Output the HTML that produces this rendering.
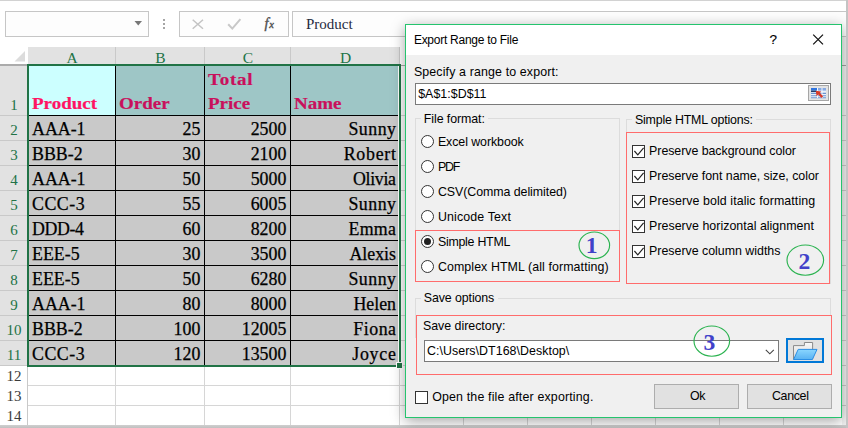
<!DOCTYPE html>
<html><head><meta charset="utf-8"><title>Export Range to File</title>
<style>
html,body{margin:0;padding:0;}
body{width:848px;height:428px;position:relative;overflow:hidden;background:#fff;font-family:"Liberation Sans",sans-serif;}
div,span{position:absolute;box-sizing:border-box;white-space:nowrap;}
.se{font-family:"Liberation Serif",serif;}
.ch{top:47px;height:17px;background:#e2e2e2;color:#217346;font-family:"Liberation Serif",serif;font-size:15.5px;line-height:21px;text-align:center;border-right:1px solid #c9c9c9;padding-left:1px;}
.rh{left:0;width:27px;background:#e2e2e2;color:#217346;font-family:"Liberation Serif",serif;font-size:15px;text-align:center;border-bottom:1px solid #c9c9c9;padding-left:1px;}
.rn{left:0;width:27px;background:#fff;color:#3b3b3b;font-family:"Liberation Serif",serif;font-size:15px;text-align:center;padding-left:1px;}
.c{background:#c9c9c9;font-family:"Liberation Serif",serif;font-size:17.85px;color:#000;height:25px;line-height:26px;border-right:1px solid #000;border-bottom:1px solid #000;-webkit-text-stroke:0.25px currentColor;}
.r{text-align:right;padding-right:3.7px;}
.l{padding-left:3px;}
.h{background:#9ec6c6;color:#c9105c;font-weight:bold;font-size:17.5px;-webkit-text-stroke:0.2px currentColor;}
.h span{transform:scaleX(1.085);transform-origin:0 0;}
.gl{background:#d6d6d6;}
.rad{width:13px;height:13px;border:1px solid #333;border-radius:50%;background:#fff;}
.cb{width:13px;height:13px;border:1px solid #333;background:#fff;}
.grp{border:1px solid #dcdcdc;}
.red{border:1px solid #ff6c6c;}
.btn{background:#e1e1e1;border:1px solid #adadad;}
.num{font-family:"Liberation Serif",serif;font-weight:bold;color:#4141c9;font-size:23.6px;line-height:24px;text-align:center;}
</style></head><body>

<div style="left:0;top:0;width:848px;height:1px;background:#d2d2d2"></div>
<div style="left:5px;top:11px;width:144px;height:26px;border:1px solid #c6c6c6;background:#fdfdfd"></div>
<svg style="position:absolute;left:134px;top:21px" width="9" height="5"><path d="M0.5 0 L8 0 L4.25 4.4 Z" fill="#777"/></svg>
<div style="left:163px;top:19px;width:2px;height:2px;background:#a6a6a6"></div>
<div style="left:163px;top:23px;width:2px;height:2px;background:#a6a6a6"></div>
<div style="left:163px;top:27px;width:2px;height:2px;background:#a6a6a6"></div>
<div style="left:179px;top:11px;width:110px;height:26px;border:1px solid #c6c6c6;background:#fdfdfd"></div>
<svg style="position:absolute;left:190px;top:17px" width="16" height="14"><path d="M2.7 2.8 L13 11.8 M13 2.8 L2.7 11.8" stroke="#c4c4c4" stroke-width="1.5" fill="none"/></svg>
<svg style="position:absolute;left:226px;top:16px" width="18" height="16"><path d="M2.2 8.2 L6.3 12.6 L14.4 3.2" stroke="#c8c8c8" stroke-width="2" fill="none"/></svg>
<span class="se" style="left:264.6px;top:13px;font-size:14.5px;line-height:20px;font-style:italic;color:#505050;-webkit-text-stroke:0.35px #505050"><span style="position:static">f</span><span style="position:static;font-size:10.5px;margin-left:0.6px">x</span></span>
<div style="left:292px;top:11px;width:558px;height:26px;border:1px solid #c6c6c6;background:#fdfdfd"></div>
<span class="se" style="left:306px;top:15px;font-size:15px;line-height:18px;color:#262b40">Product</span>
<div style="left:0;top:47px;width:28px;height:18px;background:#fff;border-bottom:1px solid #ababab"></div>
<svg style="position:absolute;left:14px;top:50px" width="12" height="12"><path d="M0.5 11.5 L11 1 L11 11.5 Z" fill="#dcdcdc"/></svg>
<div class="ch" style="left:28px;width:88px">A</div>
<div class="ch" style="left:116px;width:89px">B</div>
<div class="ch" style="left:205px;width:86px">C</div>
<div class="ch" style="left:291px;width:109px">D</div>
<div style="left:401px;top:65px;width:447px;height:1px;background:#ababab"></div>
<div class="rh" style="top:66px;height:50px;line-height:79px">1</div>
<div class="rh" style="top:116px;height:25px;line-height:29px">2</div>
<div class="rh" style="top:141px;height:25px;line-height:29px">3</div>
<div class="rh" style="top:166px;height:25px;line-height:29px">4</div>
<div class="rh" style="top:191px;height:25px;line-height:29px">5</div>
<div class="rh" style="top:216px;height:25px;line-height:29px">6</div>
<div class="rh" style="top:241px;height:25px;line-height:29px">7</div>
<div class="rh" style="top:266px;height:25px;line-height:29px">8</div>
<div class="rh" style="top:291px;height:25px;line-height:29px">9</div>
<div class="rh" style="top:316px;height:25px;line-height:29px">10</div>
<div class="rh" style="top:341px;height:25px;line-height:29px">11</div>
<div class="rn" style="top:367px;height:19px;line-height:19px">12</div>
<div class="rn" style="top:386px;height:19px;line-height:20px">13</div>
<div class="rn" style="top:406px;height:19px;line-height:20px">14</div>
<div style="left:0;top:65px;width:27px;height:1px;background:#ababab"></div>
<div class="c h" style="left:29px;top:66px;width:87px;height:50px;background:#ccffff;color:#ff1464;"><span style="left:3px;top:24px;line-height:27px">Product</span></div>
<div class="c h" style="left:116px;top:66px;width:89px;height:50px;"><span style="left:3px;top:24px;line-height:27px">Order</span></div>
<div class="c h" style="left:205px;top:66px;width:86px;height:50px;"><span style="left:3px;top:-0.5px;line-height:27px;letter-spacing:0.7px">Total</span><span style="left:3px;top:24px;line-height:27px">Price</span></div>
<div class="c h" style="left:291px;top:66px;width:107px;height:50px;border-right:none;"><span style="left:3px;top:24px;line-height:27px">Name</span></div>
<div class="c l" style="left:29px;top:116px;width:87px;">AAA-1</div>
<div class="c r" style="left:116px;top:116px;width:89px;">25</div>
<div class="c r" style="left:205px;top:116px;width:86px;">2500</div>
<div class="c r" style="left:291px;top:116px;width:107px;border-right:none;padding-right:2px;"><span style="position:static;letter-spacing:0.5px;margin-right:-0.5px">Sunny</span></div>
<div class="c l" style="left:29px;top:141px;width:87px;">BBB-2</div>
<div class="c r" style="left:116px;top:141px;width:89px;">30</div>
<div class="c r" style="left:205px;top:141px;width:86px;">2100</div>
<div class="c r" style="left:291px;top:141px;width:107px;border-right:none;padding-right:2px;"><span style="position:static;letter-spacing:0.74px;margin-right:-0.74px">Robert</span></div>
<div class="c l" style="left:29px;top:166px;width:87px;">AAA-1</div>
<div class="c r" style="left:116px;top:166px;width:89px;">50</div>
<div class="c r" style="left:205px;top:166px;width:86px;">5000</div>
<div class="c r" style="left:291px;top:166px;width:107px;border-right:none;padding-right:2px;"><span style="position:static;letter-spacing:-0.3px;margin-right:0.3px">Olivia</span></div>
<div class="c l" style="left:29px;top:191px;width:87px;"><span style="position:static;letter-spacing:0.5px">CCC-3</span></div>
<div class="c r" style="left:116px;top:191px;width:89px;">55</div>
<div class="c r" style="left:205px;top:191px;width:86px;">6005</div>
<div class="c r" style="left:291px;top:191px;width:107px;border-right:none;padding-right:2px;"><span style="position:static;letter-spacing:0.5px;margin-right:-0.5px">Sunny</span></div>
<div class="c l" style="left:29px;top:216px;width:87px;"><span style="position:static;letter-spacing:-0.4px">DDD-4</span></div>
<div class="c r" style="left:116px;top:216px;width:89px;">60</div>
<div class="c r" style="left:205px;top:216px;width:86px;">8200</div>
<div class="c r" style="left:291px;top:216px;width:107px;border-right:none;padding-right:2px;"><span style="position:static;letter-spacing:0.33px;margin-right:-0.33px">Emma</span></div>
<div class="c l" style="left:29px;top:241px;width:87px;">EEE-5</div>
<div class="c r" style="left:116px;top:241px;width:89px;">30</div>
<div class="c r" style="left:205px;top:241px;width:86px;">3500</div>
<div class="c r" style="left:291px;top:241px;width:107px;border-right:none;padding-right:2px;">Alexis</div>
<div class="c l" style="left:29px;top:266px;width:87px;">EEE-5</div>
<div class="c r" style="left:116px;top:266px;width:89px;">50</div>
<div class="c r" style="left:205px;top:266px;width:86px;">6280</div>
<div class="c r" style="left:291px;top:266px;width:107px;border-right:none;padding-right:2px;"><span style="position:static;letter-spacing:0.5px;margin-right:-0.5px">Sunny</span></div>
<div class="c l" style="left:29px;top:291px;width:87px;">AAA-1</div>
<div class="c r" style="left:116px;top:291px;width:89px;">80</div>
<div class="c r" style="left:205px;top:291px;width:86px;">8000</div>
<div class="c r" style="left:291px;top:291px;width:107px;border-right:none;padding-right:2px;">Helen</div>
<div class="c l" style="left:29px;top:316px;width:87px;">BBB-2</div>
<div class="c r" style="left:116px;top:316px;width:89px;">100</div>
<div class="c r" style="left:205px;top:316px;width:86px;">12005</div>
<div class="c r" style="left:291px;top:316px;width:107px;border-right:none;padding-right:2px;"><span style="position:static;letter-spacing:0.5px;margin-right:-0.5px">Fiona</span></div>
<div class="c l" style="left:29px;top:341px;width:87px;border-bottom:none;"><span style="position:static;letter-spacing:0.5px">CCC-3</span></div>
<div class="c r" style="left:116px;top:341px;width:89px;border-bottom:none;">120</div>
<div class="c r" style="left:205px;top:341px;width:86px;border-bottom:none;">13500</div>
<div class="c r" style="left:291px;top:341px;width:107px;border-right:none;padding-right:2px;border-bottom:none;"><span style="position:static;letter-spacing:0.8px;margin-right:-0.8px">Joyce</span></div>
<div class="gl" style="left:28px;top:385px;width:820px;height:1px"></div>
<div class="gl" style="left:28px;top:405px;width:820px;height:1px"></div>
<div class="gl" style="left:115px;top:367px;width:1px;height:58px"></div>
<div class="gl" style="left:204px;top:367px;width:1px;height:58px"></div>
<div class="gl" style="left:290px;top:367px;width:1px;height:58px"></div>
<div class="gl" style="left:399px;top:367px;width:1px;height:58px"></div>
<div class="gl" style="left:463px;top:367px;width:1px;height:58px"></div>
<div class="gl" style="left:527px;top:367px;width:1px;height:58px"></div>
<div class="gl" style="left:591px;top:367px;width:1px;height:58px"></div>
<div class="gl" style="left:655px;top:367px;width:1px;height:58px"></div>
<div class="gl" style="left:719px;top:367px;width:1px;height:58px"></div>
<div class="gl" style="left:783px;top:367px;width:1px;height:58px"></div>
<div class="gl" style="left:27px;top:367px;width:1px;height:58px;background:#c9c9c9"></div>
<div class="gl" style="left:401px;top:115px;width:447px;height:1px"></div>
<div class="gl" style="left:401px;top:140px;width:447px;height:1px"></div>
<div class="gl" style="left:401px;top:165px;width:447px;height:1px"></div>
<div class="gl" style="left:401px;top:190px;width:447px;height:1px"></div>
<div class="gl" style="left:401px;top:215px;width:447px;height:1px"></div>
<div class="gl" style="left:401px;top:240px;width:447px;height:1px"></div>
<div class="gl" style="left:401px;top:265px;width:447px;height:1px"></div>
<div class="gl" style="left:401px;top:290px;width:447px;height:1px"></div>
<div class="gl" style="left:401px;top:315px;width:447px;height:1px"></div>
<div class="gl" style="left:401px;top:340px;width:447px;height:1px"></div>
<div class="gl" style="left:401px;top:365px;width:447px;height:1px"></div>
<div style="left:842px;top:37px;width:4px;height:388px;background:rgba(0,0,0,0.05)"></div>
<div style="left:398px;top:66px;width:1px;height:299px;background:#fff"></div>
<div style="left:27px;top:64px;width:374px;height:303px;border:2px solid #217346"></div>
<div style="left:396px;top:362px;width:7px;height:7px;background:#fff"></div>
<div style="left:397px;top:363px;width:5px;height:5px;background:#217346"></div>
<div style="left:0;top:425px;width:848px;height:3px;background:linear-gradient(#cfcfcf,#c0c0c0)"></div>
<div id="dlg" style="left:405px;top:24px;width:437px;height:394px;background:#f0f0f0;border:1px solid #25c46e;box-shadow:0 3px 13px 0 rgba(0,0,0,0.36)"></div>
<div style="left:406px;top:25px;width:435px;height:30px;background:#fff"></div>
<span style="left:413.90px;top:32.34px;font-size:12px;line-height:16px;color:#000;letter-spacing:-0.260px;">Export Range to File</span>
<span style="left:769.40px;top:32.32px;font-size:13.5px;line-height:16px;color:#000;-webkit-text-stroke:0.15px #000;">?</span>
<svg style="position:absolute;left:811px;top:32px" width="14" height="14"><path d="M2.2 2.6 L12 12.4 M12 2.6 L2.2 12.4" stroke="#111" stroke-width="1.25" fill="none"/></svg>
<span style="left:413.90px;top:64.20px;font-size:12.4px;line-height:16px;color:#000;letter-spacing:0.138px;">Specify a range to export:</span>
<div style="left:415px;top:83px;width:416px;height:22px;border:1px solid #7a7a7a;background:#fff"></div>
<span style="left:418.20px;top:86.20px;font-size:12.4px;line-height:16px;color:#000;letter-spacing:0.032px;">$A$1:$D$11</span>
<svg style="position:absolute;left:808px;top:85px" width="21" height="16" viewBox="0 0 21 16"><rect x="0.5" y="0.5" width="20" height="15" fill="#e3e3e3" stroke="#a6a6a6"/><rect x="3" y="3" width="15" height="10" fill="#eaf0fa"/><rect x="3" y="3" width="6" height="2.6" fill="#2f74de"/><rect x="10" y="3" width="8" height="2.6" fill="#86a9e2"/><rect x="3" y="5.6" width="5" height="1.4" fill="#223c66"/><path d="M3 8.4H18M3 10.8H18M3 12.8H18" stroke="#6d93cf" stroke-width="1.1"/><path d="M9.5 3V13M14 3V13" stroke="#f4f7fc" stroke-width="1"/><path d="M7.8 5.8 L13.2 6.4 L11.9 8 L15.2 11.3 L13.4 12.9 L10.3 9.6 L8.6 11.2 Z" fill="#d83a27"/></svg>
<div class="grp" style="left:415px;top:118px;width:205px;height:164px"></div>
<div style="left:421px;top:118px;width:67px;height:1px;background:#f0f0f0"></div>
<span style="left:423.80px;top:111.20px;font-size:12.4px;line-height:16px;color:#000;letter-spacing:-0.081px;">File format:</span>
<div class="grp" style="left:626px;top:119px;width:205px;height:165px"></div>
<div style="left:632px;top:119px;width:124px;height:1px;background:#f0f0f0"></div>
<span style="left:634.90px;top:112.20px;font-size:12.4px;line-height:16px;color:#000;letter-spacing:-0.182px;">Simple HTML options:</span>
<div class="rad" style="left:421px;top:135px"></div>
<span style="left:437.90px;top:134.20px;font-size:12.4px;line-height:16px;color:#000;letter-spacing:-0.070px;">Excel workbook</span>
<div class="rad" style="left:421px;top:160px"></div>
<span style="left:437.90px;top:159.20px;font-size:12.4px;line-height:16px;color:#000;letter-spacing:-1.166px;">PDF</span>
<div class="rad" style="left:421px;top:185px"></div>
<span style="left:437.90px;top:184.20px;font-size:12.4px;line-height:16px;color:#000;letter-spacing:-0.057px;">CSV(Comma delimited)</span>
<div class="rad" style="left:421px;top:210px"></div>
<span style="left:437.90px;top:209.20px;font-size:12.4px;line-height:16px;color:#000;letter-spacing:0.141px;">Unicode Text</span>
<div class="rad" style="left:421px;top:235px"></div>
<div style="left:424px;top:238px;width:7px;height:7px;border-radius:50%;background:#222"></div>
<span style="left:437.90px;top:234.20px;font-size:12.4px;line-height:16px;color:#000;letter-spacing:-0.259px;">Simple HTML</span>
<div class="rad" style="left:421px;top:260px"></div>
<span style="left:437.90px;top:259.20px;font-size:12.4px;line-height:16px;color:#000;letter-spacing:0.088px;">Complex HTML (all formatting)</span>
<div class="red" style="left:415px;top:230px;width:205px;height:52px"></div>
<div class="cb" style="left:632px;top:145px"></div>
<svg style="position:absolute;left:632px;top:145px" width="13" height="13"><path d="M2.4 6 L5.8 9.8 L11.6 2.8" stroke="#222" stroke-width="1.15" fill="none"/></svg>
<span style="left:649.10px;top:143.20px;font-size:12.4px;line-height:16px;color:#000;letter-spacing:-0.051px;">Preserve background color</span>
<div class="cb" style="left:632px;top:170px"></div>
<svg style="position:absolute;left:632px;top:170px" width="13" height="13"><path d="M2.4 6 L5.8 9.8 L11.6 2.8" stroke="#222" stroke-width="1.15" fill="none"/></svg>
<span style="left:649.10px;top:168.20px;font-size:12.4px;line-height:16px;color:#000;letter-spacing:-0.032px;">Preserve font name, size, color</span>
<div class="cb" style="left:632px;top:195px"></div>
<svg style="position:absolute;left:632px;top:195px" width="13" height="13"><path d="M2.4 6 L5.8 9.8 L11.6 2.8" stroke="#222" stroke-width="1.15" fill="none"/></svg>
<span style="left:649.10px;top:193.20px;font-size:12.4px;line-height:16px;color:#000;letter-spacing:0.093px;">Preserve bold italic formatting</span>
<div class="cb" style="left:632px;top:220px"></div>
<svg style="position:absolute;left:632px;top:220px" width="13" height="13"><path d="M2.4 6 L5.8 9.8 L11.6 2.8" stroke="#222" stroke-width="1.15" fill="none"/></svg>
<span style="left:649.10px;top:218.20px;font-size:12.4px;line-height:16px;color:#000;letter-spacing:0.030px;">Preserve horizontal alignment</span>
<div class="cb" style="left:632px;top:245px"></div>
<svg style="position:absolute;left:632px;top:245px" width="13" height="13"><path d="M2.4 6 L5.8 9.8 L11.6 2.8" stroke="#222" stroke-width="1.15" fill="none"/></svg>
<span style="left:649.10px;top:243.20px;font-size:12.4px;line-height:16px;color:#000;letter-spacing:-0.011px;">Preserve column widths</span>
<div class="red" style="left:626px;top:132px;width:204px;height:152px"></div>
<div class="grp" style="left:415px;top:298px;width:416px;height:40px;border-bottom:none"></div>
<div style="left:421px;top:298px;width:77px;height:1px;background:#f0f0f0"></div>
<span style="left:423.80px;top:290.20px;font-size:12.4px;line-height:16px;color:#000;letter-spacing:-0.103px;">Save options</span>
<div class="red" style="left:416px;top:315px;width:416px;height:60px;background:#f0f0f0"></div>
<span style="left:422.90px;top:318.20px;font-size:12.4px;line-height:16px;color:#000;letter-spacing:-0.009px;">Save directory:</span>
<div style="left:424px;top:340px;width:355px;height:22px;border:1px solid #7a7a7a;background:#fff"></div>
<span style="left:427.00px;top:343.20px;font-size:12.4px;line-height:16px;color:#000;letter-spacing:0.049px;">C:\Users\DT168\Desktop\</span>
<svg style="position:absolute;left:764px;top:347px" width="12" height="9"><path d="M1.8 2.8 L5.8 6.8 L9.8 2.8" stroke="#444" stroke-width="1.1" fill="none"/></svg>
<div style="left:786px;top:338px;width:38px;height:25px;border:2px solid #0078d7;background:#e1e1e1"></div>
<svg style="position:absolute;left:792px;top:341px" width="27" height="20" viewBox="0 0 27 20"><defs><linearGradient id="fg" x1="0" y1="0" x2="0" y2="1"><stop offset="0" stop-color="#8ad6ff"/><stop offset="1" stop-color="#58b2f2"/></linearGradient><linearGradient id="bg" x1="0" y1="0" x2="0" y2="1"><stop offset="0" stop-color="#fafafa"/><stop offset="1" stop-color="#d4d4d4"/></linearGradient></defs><path d="M1.5 18.3 V4.6 H12.4 V1.5 H20.6 V18 Z" fill="url(#bg)" stroke="#8a8a8a" stroke-width="1"/><path d="M1.6 18.5 L6.2 8.4 H25 L20.4 18.5 Z" fill="url(#fg)" stroke="#2a8fe6" stroke-width="1"/></svg>
<svg style="position:absolute;left:577.4000000000001px;top:230.0px" width="34.6" height="30.6"><ellipse cx="17.3" cy="15.3" rx="15.3" ry="13.3" fill="none" stroke="#2bb350" stroke-width="1.15"/></svg>
<span class="num" style="left:581.7px;top:233.3px;width:20px">1</span>
<svg style="position:absolute;left:785.2px;top:243.4px" width="40.6" height="34.2"><ellipse cx="20.3" cy="17.1" rx="18.3" ry="15.1" fill="none" stroke="#2bb350" stroke-width="1.15"/></svg>
<span class="num" style="left:794.5px;top:248.5px;width:20px">2</span>
<svg style="position:absolute;left:692.2px;top:323.59999999999997px" width="39.6" height="34.2"><ellipse cx="19.8" cy="17.1" rx="17.8" ry="15.1" fill="none" stroke="#2bb350" stroke-width="1.15"/></svg>
<span class="num" style="left:699.5px;top:329.9px;width:20px">3</span>
<div class="cb" style="left:415px;top:391px"></div>
<span style="left:432.20px;top:389.20px;font-size:12.4px;line-height:16px;color:#000;letter-spacing:0.165px;">Open the file after exporting.</span>
<div class="btn" style="left:654px;top:384px;width:85px;height:25px"></div>
<span style="left:689.90px;top:388.20px;font-size:12.4px;line-height:16px;color:#000;letter-spacing:-0.172px;">Ok</span>
<div class="btn" style="left:747px;top:384px;width:85px;height:25px"></div>
<span style="left:772.00px;top:388.20px;font-size:12.4px;line-height:16px;color:#000;letter-spacing:-0.330px;">Cancel</span>
<div style="left:846px;top:0;width:2px;height:428px;background:#c4c4c4"></div>
</body></html>
